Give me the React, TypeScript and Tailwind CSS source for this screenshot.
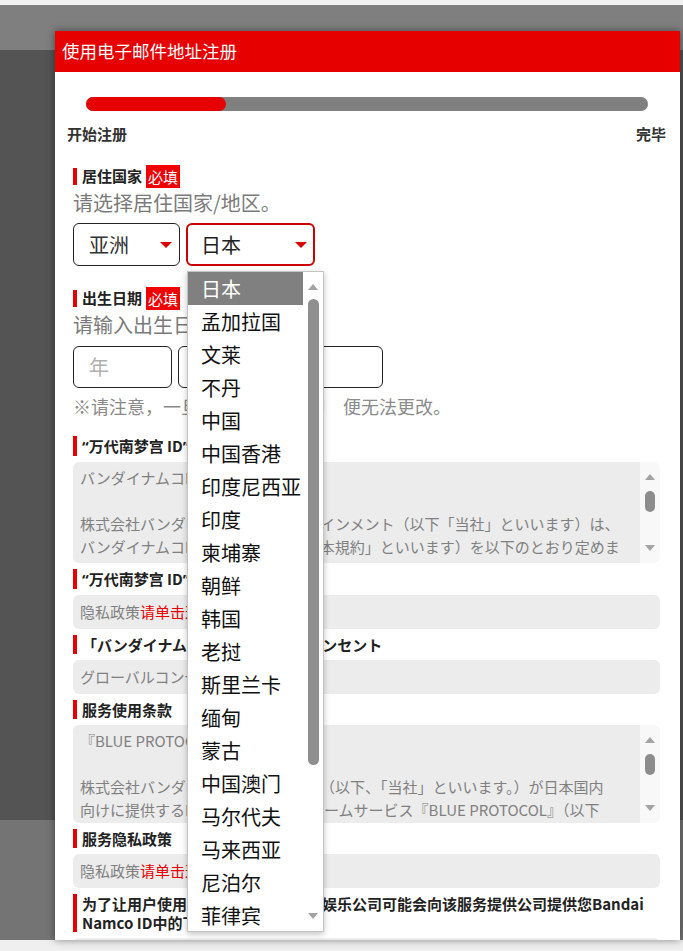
import React from "react";

const UpArrow = () => (
  <svg width="10" height="6" viewBox="0 0 10 6">
    <polygon points="0,6 10,6 5,0" fill="#a3a3a3" />
  </svg>
);
const DownArrow = () => (
  <svg width="10" height="6" viewBox="0 0 10 6">
    <polygon points="0,0 10,0 5,6" fill="#a3a3a3" />
  </svg>
);
const RedTri = () => (
  <svg width="12" height="6" viewBox="0 0 12 6">
    <polygon points="0,0 12,0 6,6" fill="#d80000" />
  </svg>
);

function Title({ children, className = "" }: { children: React.ReactNode; className?: string }) {
  return (
    <div
      className={
        "border-l-4 border-[#e60000] pl-[5px] text-[15px] font-bold leading-[19px] text-[#222] whitespace-nowrap overflow-hidden " +
        className
      }
    >
      {children}
    </div>
  );
}

function ReqTitle({ children, className = "" }: { children: React.ReactNode; className?: string }) {
  return (
    <div className={"flex h-[23px] items-center " + className}>
      <div className="h-[17px] w-[4px] bg-[#e60000]" />
      <span className="ml-[5px] text-[15px] font-bold text-[#222]">{children}</span>
      <span className="ml-[4px] bg-[#f20000] px-[2px] text-[15px] leading-[23px] text-white">必填</span>
    </div>
  );
}

function ScrollBox({ children, heightClass }: { children: React.ReactNode; heightClass: string }) {
  return (
    <div className={"mt-[6px] flex overflow-hidden rounded-[6px] " + heightClass}>
      <div className="flex-1 overflow-hidden whitespace-nowrap bg-[#ececec] px-[7px] pt-[4px] font-['Noto_Sans_CJK_JP',sans-serif] text-[15px] leading-[23px] text-[#808080]">
        {children}
      </div>
      <div className="flex w-[20px] flex-col items-center bg-[#f8f8f8] pb-[12px] pt-[12px]">
        <UpArrow />
        <div className="mt-[11px] h-[21px] w-[10px] rounded-full bg-[#8c8c8c]" />
        <div className="flex-1" />
        <DownArrow />
      </div>
    </div>
  );
}

function PlainBox({ children }: { children: React.ReactNode }) {
  return (
    <div className="mt-[6px] flex h-[34px] items-center overflow-hidden whitespace-nowrap rounded-[6px] bg-[#ececec] px-[7px] text-[15px] text-[#808080]">
      {children}
    </div>
  );
}

const countries = [
  "日本",
  "孟加拉国",
  "文莱",
  "不丹",
  "中国",
  "中国香港",
  "印度尼西亚",
  "印度",
  "柬埔寨",
  "朝鲜",
  "韩国",
  "老挝",
  "斯里兰卡",
  "缅甸",
  "蒙古",
  "中国澳门",
  "马尔代夫",
  "马来西亚",
  "尼泊尔",
  "菲律宾",
];

export default function App() {
  return (
    <div className="relative h-[951px] w-[683px] overflow-hidden font-['Noto_Sans_CJK_SC',sans-serif]">
      {/* background bands */}
      <div className="flex h-full flex-col">
        <div className="h-[5px] bg-[#f1f1f1]" />
        <div className="h-[45px] bg-[#7f7f7f]" />
        <div className="h-[770px] bg-[#545454]" />
        <div className="h-[120px] bg-[#747474]" />
        <div className="h-[11px] bg-[#efefef]" />
      </div>

      {/* modal */}
      <div className="absolute left-[55px] top-[31px] h-[909px] w-[625px] overflow-hidden bg-white shadow-[0_0_8px_rgba(0,0,0,0.45)]">
        <div className="flex h-[41px] items-center bg-[#e60000] pl-[7px] text-[17.5px] text-white">
          使用电子邮件地址注册
        </div>

        <div className="pt-[25px]">
          <div className="pl-[31px] pr-[32px]">
            <div className="h-[14px] rounded-full bg-[#808080]">
              <div className="h-[14px] w-[140px] rounded-full bg-[#e60000]" />
            </div>
          </div>
          <div className="mt-[13px] flex justify-between pl-[12px] pr-[14px] text-[15px] font-bold leading-[20px] text-[#333]">
            <span>开始注册</span>
            <span>完毕</span>
          </div>

          <div className="pl-[18px] pr-[20px]">
            <ReqTitle className="mt-[21px]">居住国家</ReqTitle>
            <div className="mt-[2px] text-[20px] leading-[26px] text-[#7a7a7a]">请选择居住国家/地区。</div>
            <div className="mt-[7px] flex">
              <div className="flex h-[43px] w-[107px] items-center justify-between rounded-[6px] border border-[#222] pl-[15px] pr-[7px] text-[20px] text-[#333]">
                <span>亚洲</span>
                <RedTri />
              </div>
              <div className="ml-[6px] flex h-[43px] w-[129px] items-center justify-between rounded-[6px] border-2 border-[#cc0000] pl-[13px] pr-[6px] text-[20px] text-[#222]">
                <span>日本</span>
                <RedTri />
              </div>
            </div>

            <ReqTitle className="mt-[21px]">出生日期</ReqTitle>
            <div className="mt-[2px] text-[20px] leading-[26px] text-[#7a7a7a]">请输入出生日期</div>
            <div className="mt-[8px] flex">
              <div className="flex h-[42px] w-[99px] items-center rounded-[6px] border border-[#222] pl-[15px] text-[20px] text-[#b0b0b0]">
                年
              </div>
              <div className="ml-[6px] flex h-[42px] w-[99px] items-center rounded-[6px] border border-[#222] pl-[15px] text-[20px] text-[#b0b0b0]">
                月
              </div>
              <div className="ml-[6px] flex h-[42px] w-[100px] items-center rounded-[6px] border border-[#222] pl-[15px] text-[20px] text-[#b0b0b0]">
                日
              </div>
            </div>
            <div className="mt-[6px] whitespace-nowrap text-[18px] leading-[24px] text-[#8a8a8a]">
              ※请注意，一旦注册后出生日期　便无法更改。
            </div>

            <Title className="mt-[18px]">
              <span className="font-['Noto_Sans',sans-serif]">“</span>万代南梦宫 ID<span className="font-['Noto_Sans',sans-serif]">”</span>使用条款
            </Title>
            <ScrollBox heightClass="h-[101px]">
              <div>バンダイナムコID利用規約</div>
              <div>&nbsp;</div>
              <div>株式会社バンダイナムコエンターテインメント（以下「当社」といいます）は、</div>
              <div>バンダイナムコID利用規約（以下「本規約」といいます）を以下のとおり定めま</div>
              <div>す。</div>
            </ScrollBox>

            <Title className="mt-[6px]">
              <span className="font-['Noto_Sans',sans-serif]">“</span>万代南梦宫 ID<span className="font-['Noto_Sans',sans-serif]">”</span>隐私政策
            </Title>
            <PlainBox>
              隐私政策<span className="text-[#e60000]">请单击这里</span>
            </PlainBox>

            <Title className="mt-[6px] font-['Noto_Sans_CJK_JP',sans-serif]">「バンダイナムコID」グローバルコンセント</Title>
            <PlainBox>
              <span className="font-['Noto_Sans_CJK_JP',sans-serif]">グローバルコンセントはこちら</span>
            </PlainBox>

            <Title className="mt-[6px]">服务使用条款</Title>
            <ScrollBox heightClass="h-[98px]">
              <div>『BLUE PROTOCOL』利用規約</div>
              <div>&nbsp;</div>
              <div>株式会社バンダイナムコオンライン（以下、「当社」といいます。）が日本国内</div>
              <div>向けに提供するPC向けオンラインゲームサービス『BLUE PROTOCOL』（以下</div>
              <div>「本サービス」といいます。）の利用について定めます。</div>
            </ScrollBox>

            <Title className="mt-[6px]">服务隐私政策</Title>
            <PlainBox>
              隐私政策<span className="text-[#e60000]">请单击这里</span>
            </PlainBox>

            <Title className="mt-[6px]">
              为了让用户使用该服务，万代南梦宫娱乐公司可能会向该服务提供公司提供您Bandai
              <br />
              Namco ID中的下列信息。
            </Title>
            <div className="mt-[6px] h-[60px] rounded-[6px] bg-[#ececec]" />
          </div>
        </div>
      </div>

      {/* dropdown list */}
      <div className="absolute left-[187px] top-[271px] z-10 flex h-[661px] w-[137px] border border-[#c4c4c4] bg-white shadow-[0_2px_6px_rgba(0,0,0,0.25)]">
        <div className="w-[115px]">
          {countries.map((c, i) => (
            <div
              key={c}
              className={
                "flex h-[33px] items-center whitespace-nowrap pl-[13px] text-[20px] " +
                (i === 0 ? "bg-[#808080] text-white" : "text-[#111]")
              }
            >
              {c}
            </div>
          ))}
        </div>
        <div className="flex flex-1 flex-col items-center pb-[12px] pt-[12px]">
          <UpArrow />
          <div className="mt-[9px] h-[466px] w-[11px] rounded-full bg-[#8f8f8f]" />
          <div className="flex-1" />
          <DownArrow />
        </div>
      </div>
    </div>
  );
}
